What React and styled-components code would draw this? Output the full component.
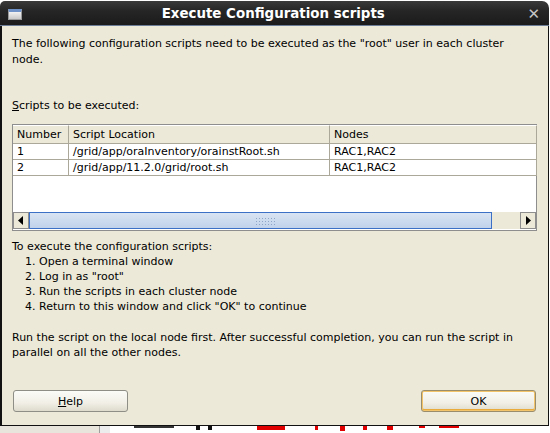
import React from 'react'
import styled, { createGlobalStyle } from 'styled-components'

const Global = createGlobalStyle`
  html, body {
    margin: 0;
    padding: 0;
    background: #ffffff;
  }
  * { box-sizing: border-box; }
`;

const Page = styled.div`
  width: 550px;
  height: 433px;
  overflow: hidden;
  display: flex;
  flex-direction: column;
  font-family: "DejaVu Sans", "Liberation Sans", sans-serif;
`;

const Window = styled.div`
  width: 549px;
  height: 426px;
  display: flex;
  flex-direction: column;
`;

const TitleBar = styled.div`
  height: 25px;
  flex: none;
  display: flex;
  align-items: center;
  padding: 0 9px 0 8px;
  border-radius: 5px 7px 0 0;
  background: linear-gradient(#3a3a3a, #262626 40%, #1b1b1b);
  border-bottom: 1px solid #6b7d96;
  margin-top: 1px;
`;

const WinIcon = styled.div`
  width: 14px;
  height: 11px;
  margin-top: 2px;
  background: linear-gradient(#f2f2f2, #c8c8c8);
  border-top: 3px solid #6f93c8;
  border-left: 1px solid #9a9a9a;
  border-right: 1px solid #9a9a9a;
  border-bottom: 1px solid #9a9a9a;
`;

const Title = styled.div`
  flex: 1;
  text-align: center;
  color: #ffffff;
  font-weight: bold;
  font-size: 13.4px;
  padding-right: 3px;
`;

const Close = styled.div`
  color: #c4c4c4;
  font-weight: bold;
  font-size: 15px;
  line-height: 1;
  margin-top: 2px;
`;

const Body = styled.div`
  flex: 1;
  display: flex;
  flex-direction: column;
  background: #ece9d8;
  border-left: 2px solid #111;
  border-right: 1px solid #111;
  border-bottom: 1px solid #111;
  padding: 10px 11px 13px 10px;
  font-size: 11px;
  color: #000;
`;

const Para = styled.p`
  margin: ${p => p.$mt || 0}px 0 0 0;
  line-height: ${p => p.$lh || 16}px;
`;

const Mnemonic = styled.span`
  text-decoration: underline;
`;

const TableBox = styled.div`
  margin-top: 10px;
  height: 107px;
  border: 1px solid #8e8e8e;
  background: #ffffff;
  display: flex;
  flex-direction: column;
`;

const Grid = styled.div`
  flex: 1;
  display: grid;
  grid-template-columns: 56px 261px 207px;
  grid-template-rows: 19px;
  grid-auto-rows: 16px;
  align-content: start;
`;

const Row = styled.div`
  display: contents;
`;

const HeadCell = styled.div`
  line-height: 17px;
  padding-left: 4px;
  background: #ece9d8;
  border-top: 1px solid #ffffff;
  border-right: 1px solid #aca899;
  border-bottom: 1px solid #aca899;
`;

const Cell = styled.div`
  line-height: 15px;
  padding-left: 4px;
  border-right: 1px solid #aca899;
  border-bottom: 1px solid #aca899;
  white-space: nowrap;
  overflow: hidden;
`;

const ScrollBar = styled.div`
  height: 17px;
  flex: none;
  display: flex;
  margin-bottom: 1px;
`;

const ArrowBtn = styled.div`
  width: 16px;
  background: #ece9d8;
  border: 1px solid #8e8e8e;
  display: flex;
  align-items: center;
  justify-content: center;
`;

const Thumb = styled.div`
  width: 463px;
  background: linear-gradient(#d9e4f3, #c0d2ea);
  border: 1px solid #3c6fc6;
  display: flex;
  align-items: center;
  justify-content: center;
`;

const Track = styled.div`
  flex: 1;
  background: #ece9d8;
`;

const Grip = styled.div`
  width: 22px;
  height: 8px;
  margin-left: 10px;
  background-image: radial-gradient(circle, #8ea5c8 0.8px, transparent 1px);
  background-size: 3px 3px;
`;

const Steps = styled.ol`
  margin: 0;
  padding-left: 27px;
  line-height: 15px;
`;

const Footer = styled.div`
  margin-top: auto;
  display: flex;
  justify-content: space-between;
  padding: 0 1px 0 1px;
`;

const Button = styled.button`
  width: 115px;
  height: 22px;
  font-family: "DejaVu Sans", "Liberation Sans", sans-serif;
  font-size: 11px;
  color: #000;
  border-radius: 3px;
  background: linear-gradient(#fbfbf8, #f1efe6 60%, #dedbcd);
  border: 1px solid ${p => (p.$default ? '#9a8d6c' : '#8e8e86')};
  box-shadow: ${p => (p.$default ? 'inset 0 0 0 1px #f3c46a, inset 0 -1px 0 1px #e8ab3c' : 'none')};
  padding: 0;
`;

const Below = styled.div`
  height: 7px;
  display: flex;
  align-items: flex-start;
  overflow: hidden;
`;

const BelowPane = styled.div`
  width: 100px;
  height: 100%;
  background: #e8e6dc;
  border-right: 1px solid #9d9d9d;
`;

const BelowGap = styled.div`
  width: 10px;
  height: 100%;
  background: #ececec;
`;

const Blob = styled.div`
  margin-left: ${p => p.$ml}px;
  width: ${p => p.$w}px;
  height: ${p => p.$h || 3}px;
  background: ${p => p.$c || '#e00000'};
`;

const LeftArrow = () => (
  <svg width="6" height="9" viewBox="0 0 6 9"><path d="M5 0v9L0 4.5z" fill="#000" /></svg>
)

const RightArrow = () => (
  <svg width="6" height="9" viewBox="0 0 6 9"><path d="M1 0v9l5-4.5z" fill="#000" /></svg>
)

const rows = [
  ['1', '/grid/app/oraInventory/orainstRoot.sh', 'RAC1,RAC2'],
  ['2', '/grid/app/11.2.0/grid/root.sh', 'RAC1,RAC2'],
]

const App = () => (
  <Page>
    <Global />
    <Window>
      <TitleBar>
        <WinIcon />
        <Title>Execute Configuration scripts</Title>
        <Close>✕</Close>
      </TitleBar>
      <Body>
        <Para>
          The following configuration scripts need to be executed as the "root" user in each cluster node.
        </Para>
        <Para $mt={30}>
          <Mnemonic>S</Mnemonic>cripts to be executed:
        </Para>
        <TableBox>
          <Grid>
            <Row>
              <HeadCell>Number</HeadCell>
              <HeadCell>Script Location</HeadCell>
              <HeadCell>Nodes</HeadCell>
            </Row>
            {rows.map(r => (
              <Row key={r[0]}>
                <Cell>{r[0]}</Cell>
                <Cell>{r[1]}</Cell>
                <Cell>{r[2]}</Cell>
              </Row>
            ))}
          </Grid>
          <ScrollBar>
            <ArrowBtn><LeftArrow /></ArrowBtn>
            <Thumb><Grip /></Thumb>
            <Track />
            <ArrowBtn><RightArrow /></ArrowBtn>
          </ScrollBar>
        </TableBox>
        <Para $mt={8} $lh={15}>To execute the configuration scripts:</Para>
        <Steps>
          <li>Open a terminal window</li>
          <li>Log in as "root"</li>
          <li>Run the scripts in each cluster node</li>
          <li>Return to this window and click "OK" to continue</li>
        </Steps>
        <Para $mt={16} $lh={15}>
          Run the script on the local node first. After successful completion, you can run the script in parallel on all the other nodes.
        </Para>
        <Footer>
          <Button><Mnemonic>H</Mnemonic>elp</Button>
          <Button $default>OK</Button>
        </Footer>
      </Body>
    </Window>
    <Below>
      <BelowPane />
      <BelowGap />
      <Blob $ml={24} $w={40} $h={2} $c="#333" />
      <Blob $ml={22} $w={4} $h={4} $c="#111" />
      <Blob $ml={8} $w={4} $h={4} $c="#111" />
      <Blob $ml={45} $w={28} $h={4} />
      <Blob $ml={30} $w={3} $h={4} />
      <Blob $ml={22} $w={5} $h={5} />
      <Blob $ml={18} $w={4} $h={4} />
      <Blob $ml={20} $w={6} $h={4} />
      <Blob $ml={26} $w={6} $h={2} />
      <Blob $ml={14} $w={20} $h={2} />
    </Below>
  </Page>
)

export default App
